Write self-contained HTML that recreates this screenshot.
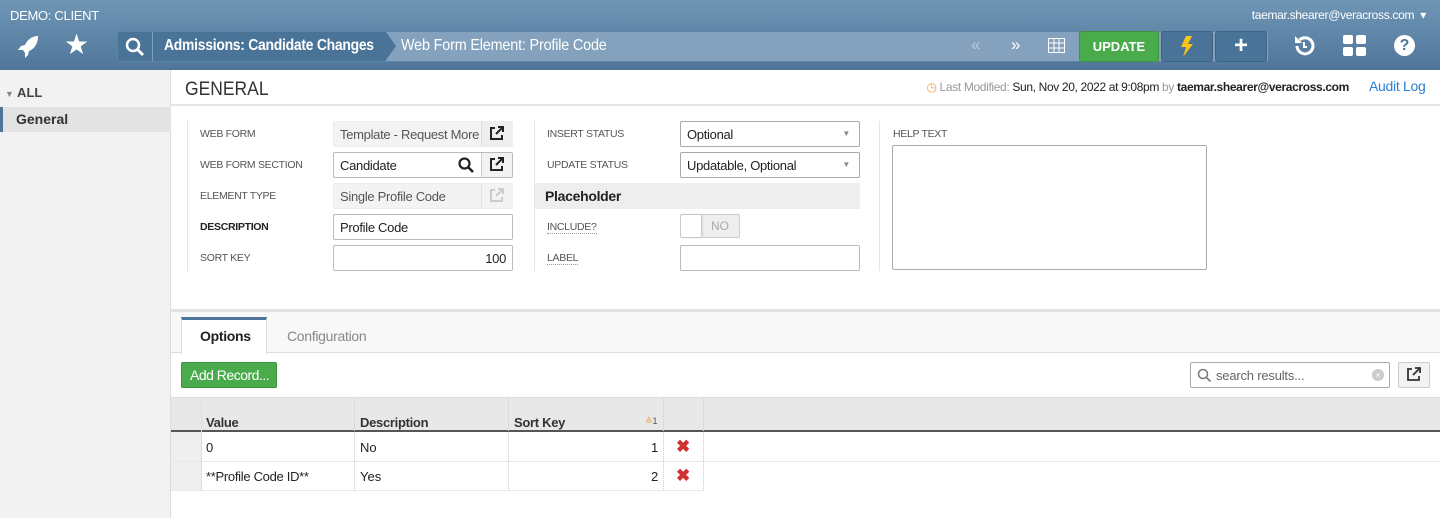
<!DOCTYPE html>
<html><head><meta charset="utf-8"><style>
*{box-sizing:border-box;margin:0;padding:0}
body{width:1440px;height:518px;overflow:hidden;font-family:"Liberation Sans",sans-serif;background:#fff;position:relative;color:#222}
.abs{position:absolute}
.top{left:0;top:0;width:1440px;height:70px;background:linear-gradient(#7096b6,#4f7699);}
.lbl{font-size:10.5px;color:#555;letter-spacing:-.3px}
.inp{position:absolute;height:26px;border:1px solid #bbb;background:#fff;font-size:13px;letter-spacing:-.3px;padding:5px 6px;border-radius:2px;white-space:nowrap;overflow:hidden}
.ro{background:#f3f3f3;border-color:#eee}
</style></head><body>
<div class="abs top"></div>
<div class="abs" style="left:10px;top:8px;color:#fff;font-size:13px;letter-spacing:-.3px">DEMO: CLIENT</div>
<div class="abs" style="right:14px;top:8px;color:#fff;font-size:12px;letter-spacing:-.3px">taemar.shearer@veracross.com &nbsp;▾</div>
<svg class="abs" style="left:16px;top:34px" width="24" height="24" viewBox="0 0 24 24"><path d="M22 2c-6 0-11 4-13 9l-4 1-3 4 5 0 2 3 0 5 3-3 1-4c5-2 9-7 9-15z" fill="#fff"/></svg>
<div class="abs" style="left:64px;top:28px;color:#fff;font-size:28px">★</div>
<div class="abs" style="left:117px;top:31px;width:1152px;height:31px;background:#84a2bd;border:1px solid #5f83a4;border-radius:3px"></div>
<div class="abs" style="left:118px;top:32px;width:268px;height:29px;background:#4a7398"></div>
<div class="abs" style="left:386px;top:32px;width:0;height:0;border-top:14.5px solid transparent;border-bottom:14.5px solid transparent;border-left:10px solid #4a7398"></div>
<div class="abs" style="left:152px;top:32px;width:1px;height:29px;background:#7f9fbb"></div>
<svg class="abs" style="left:125px;top:37px" width="20" height="20" viewBox="0 0 20 20"><circle cx="8" cy="8" r="6" stroke="#fff" stroke-width="2.5" fill="none"/><path d="M12 12l6 6" stroke="#fff" stroke-width="3"/></svg>
<div class="abs" style="left:164px;top:37px;color:#fff;font-size:16px;font-weight:bold;letter-spacing:-.3px;transform:scaleX(.87);transform-origin:left;white-space:nowrap">Admissions: Candidate Changes</div>
<div class="abs" style="left:401px;top:37px;color:#fff;font-size:16px;letter-spacing:-.2px;transform:scaleX(.9);transform-origin:left;white-space:nowrap">Web Form Element: Profile Code</div>
<div class="abs" style="left:971px;top:35px;color:#b8cadb;font-size:17px">«</div>
<div class="abs" style="left:1011px;top:35px;color:#fff;font-size:17px">»</div>
<svg class="abs" style="left:1048px;top:38px" width="17" height="15" viewBox="0 0 17 15"><rect x=".5" y=".5" width="16" height="14" fill="none" stroke="#fff"/><path d="M0 5h17M0 10h17M6 0v15M11 0v15" stroke="#fff"/></svg>
<div class="abs" style="left:1079px;top:31px;width:80px;height:31px;background:#4aab4c;border:1px solid #3d9340;border-radius:3px;color:#fff;font-weight:bold;font-size:13px;text-align:center;line-height:29px">UPDATE</div>
<div class="abs" style="left:1161px;top:31px;width:52px;height:31px;background:#4a7398;border:1px solid #3e6385;border-radius:3px"></div>
<svg class="abs" style="left:1180px;top:36px" width="14" height="21" viewBox="0 0 14 21"><path d="M6 0h6L8 8h5L3 21l3-10H1z" fill="#f5c518"/></svg>
<div class="abs" style="left:1215px;top:31px;width:52px;height:31px;background:#4a7398;border:1px solid #3e6385;border-radius:3px;color:#fff;text-align:center;font-size:24px;font-weight:bold;line-height:28px">+</div>
<svg class="abs" style="left:1292px;top:34px" width="24" height="24" viewBox="0 0 24 24"><path d="M5 12a8 8 0 1 0 2.5-6" stroke="#fff" stroke-width="3" fill="none"/><path d="M3 2v7h7z" fill="#fff"/><path d="M12 8v5h3" stroke="#fff" stroke-width="2" fill="none"/></svg>
<svg class="abs" style="left:1343px;top:35px" width="23" height="21"><rect width="10" height="9" rx="2" fill="#fff"/><rect x="13" width="10" height="9" rx="2" fill="#fff"/><rect y="12" width="10" height="9" rx="2" fill="#fff"/><rect x="13" y="12" width="10" height="9" rx="2" fill="#fff"/></svg>
<div class="abs" style="left:1394px;top:35px;width:21px;height:21px;border-radius:50%;background:#fff;color:#4f7699;font-weight:bold;font-size:16px;text-align:center;line-height:21px">?</div>
<!-- sidebar -->
<div class="abs" style="left:0;top:70px;width:171px;height:448px;background:#f2f2f2;border-right:1px solid #ddd"></div>
<div class="abs" style="left:5px;top:85px;font-size:13px;font-weight:bold;color:#444"><span style="font-size:9px;color:#888">▼</span> ALL</div>
<div class="abs" style="left:0;top:107px;width:171px;height:25px;background:#e3e3e3;border-left:3px solid #4f7699"></div>
<div class="abs" style="left:16px;top:111px;font-size:14px;font-weight:bold;color:#333">General</div>
<!-- header -->
<div class="abs" style="left:185px;top:79px;font-size:19px;color:#333;transform:scaleX(.92);transform-origin:left">GENERAL</div>
<div class="abs" style="right:91px;top:80px;font-size:12px;color:#999;letter-spacing:-.35px;white-space:nowrap"><span style="color:#f0a040">◷</span> Last Modified: <span style="color:#222">Sun, Nov 20, 2022 at 9:08pm</span> by <b style="color:#222">taemar.shearer@veracross.com</b></div>
<div class="abs" style="left:1369px;top:78px;font-size:14px;color:#2a7fd4;letter-spacing:-.3px">Audit Log</div>
<div class="abs" style="left:171px;top:104px;width:1269px;height:2px;background:#e6e6e6"></div>
<!-- form -->
<div class="abs" style="left:187px;top:121px;width:1px;height:150px;background:#e5e5e5"></div>
<div class="abs" style="left:534px;top:121px;width:1px;height:150px;background:#e5e5e5"></div>
<div class="abs" style="left:879px;top:121px;width:1px;height:150px;background:#e5e5e5"></div>
<div class="abs lbl" style="left:200px;top:128px">WEB FORM</div>
<div class="abs lbl" style="left:200px;top:159px">WEB FORM SECTION</div>
<div class="abs lbl" style="left:200px;top:190px">ELEMENT TYPE</div>
<div class="abs lbl" style="left:200px;top:221px;font-weight:bold;color:#222">DESCRIPTION</div>
<div class="abs lbl" style="left:200px;top:252px">SORT KEY</div>
<div class="inp ro" style="left:333px;top:121px;width:180px;color:#555">Template - Request More I</div>
<div class="inp" style="left:333px;top:152px;width:180px">Candidate</div>
<div class="inp ro" style="left:333px;top:183px;width:180px;color:#555">Single Profile Code</div>
<div class="inp" style="left:333px;top:214px;width:180px">Profile Code</div>
<div class="inp" style="left:333px;top:245px;width:180px;text-align:right">100</div>
<div class="abs" style="left:481px;top:122px;width:31px;height:24px;background:#eee;border-left:1px solid #ddd"></div>
<div class="abs" style="left:481px;top:153px;width:31px;height:24px;background:#f2f2f2;border-left:1px solid #ccc"></div>
<div class="abs" style="left:481px;top:184px;width:31px;height:24px;background:#f3f3f3;border-left:1px solid #e5e5e5"></div>
<svg class="abs" style="left:489px;top:126px" width="15" height="15" viewBox="0 0 15 15"><path d="M6 2H2v11h11V9" stroke="#222" stroke-width="2" fill="none"/><path d="M7 8l6-6M9 1h5v5" stroke="#222" stroke-width="2" fill="none"/></svg>
<svg class="abs" style="left:489px;top:157px" width="15" height="15" viewBox="0 0 15 15"><path d="M6 2H2v11h11V9" stroke="#222" stroke-width="2" fill="none"/><path d="M7 8l6-6M9 1h5v5" stroke="#222" stroke-width="2" fill="none"/></svg>
<svg class="abs" style="left:489px;top:188px" width="15" height="15" viewBox="0 0 15 15"><path d="M6 2H2v11h11V9" stroke="#ccc" stroke-width="2" fill="none"/><path d="M7 8l6-6M9 1h5v5" stroke="#ccc" stroke-width="2" fill="none"/></svg>
<svg class="abs" style="left:458px;top:157px" width="16" height="16" viewBox="0 0 16 16"><circle cx="6.5" cy="6.5" r="5" stroke="#222" stroke-width="2.2" fill="none"/><path d="M10 10l5 5" stroke="#222" stroke-width="2.6"/></svg>
<div class="abs lbl" style="left:547px;top:128px">INSERT STATUS</div>
<div class="abs lbl" style="left:547px;top:159px">UPDATE STATUS</div>
<div class="abs" style="left:535px;top:183px;width:325px;height:26px;background:#eeeeee"></div>
<div class="abs" style="left:545px;top:188px;font-size:14px;font-weight:bold;letter-spacing:-.3px">Placeholder</div>
<div class="abs lbl" style="left:547px;top:221px;border-bottom:1px dotted #999">INCLUDE?</div>
<div class="abs lbl" style="left:547px;top:252px;border-bottom:1px dotted #999">LABEL</div>
<div class="inp" style="left:680px;top:121px;width:180px;border-color:#aaa">Optional<span style="position:absolute;right:9px;top:7px;font-size:8px;color:#888">▼</span></div>
<div class="inp" style="left:680px;top:152px;width:180px;border-color:#aaa">Updatable, Optional<span style="position:absolute;right:9px;top:7px;font-size:8px;color:#888">▼</span></div>
<div class="abs" style="left:680px;top:214px;width:60px;height:24px;border:1px solid #ccc;background:#eee;border-radius:2px;font-size:12px;color:#aaa;padding:4px 0 0 30px">NO</div>
<div class="abs" style="left:681px;top:215px;width:20px;height:22px;background:#fff;border-radius:2px;box-shadow:1px 0 2px #bbb"></div>
<div class="inp" style="left:680px;top:245px;width:180px"></div>
<div class="abs lbl" style="left:893px;top:128px">HELP TEXT</div>
<div class="abs" style="left:892px;top:145px;width:315px;height:125px;border:1px solid #aaa;border-radius:2px"></div>
<!-- divider -->
<div class="abs" style="left:171px;top:309px;width:1269px;height:3px;background:#e3e3e3"></div>
<div class="abs" style="left:171px;top:312px;width:1269px;height:41px;background:#f8f8f8;border-bottom:1px solid #ddd"></div>
<div class="abs" style="left:181px;top:317px;width:86px;height:37px;background:#fff;border:1px solid #ddd;border-top:3px solid #4f7699;border-bottom:none"></div>
<div class="abs" style="left:200px;top:328px;font-size:14px;font-weight:bold;letter-spacing:-.3px">Options</div>
<div class="abs" style="left:287px;top:328px;font-size:14px;color:#888;letter-spacing:-.3px">Configuration</div>
<div class="abs" style="left:181px;top:362px;width:96px;height:26px;background:#4aab4c;border:1px solid #3d9340;border-radius:2px;color:#fff;font-size:14px;letter-spacing:-.5px;padding:4px 0 0 8px;white-space:nowrap">Add Record...</div>
<div class="abs" style="left:1190px;top:362px;width:200px;height:26px;border:1px solid #aaa;border-radius:2px;font-size:13px;color:#666;padding:5px 0 0 25px;letter-spacing:-.2px">search results...</div>
<svg class="abs" style="left:1197px;top:368px" width="15" height="15" viewBox="0 0 15 15"><circle cx="6" cy="6" r="4.5" stroke="#777" stroke-width="1.5" fill="none"/><path d="M9.5 9.5l4 4" stroke="#777" stroke-width="1.6"/></svg>
<div class="abs" style="left:1372px;top:369px;width:12px;height:12px;border-radius:50%;background:#ccc;color:#fff;font-size:9px;text-align:center;line-height:12px">×</div>
<div class="abs" style="left:1398px;top:362px;width:32px;height:26px;border:1px solid #ccc;border-radius:2px;background:#f3f3f3"></div>
<svg class="abs" style="left:1406px;top:367px" width="15" height="15" viewBox="0 0 15 15"><path d="M6 2H2v11h11V9" stroke="#333" stroke-width="1.8" fill="none"/><path d="M7 8l6-6M9 1h5v5" stroke="#333" stroke-width="1.8" fill="none"/></svg>
<!-- table -->
<div class="abs" style="left:171px;top:397px;width:1269px;height:35px;background:#e8e8e8;border-top:1px solid #ddd;border-bottom:2px solid #555"></div>
<div class="abs" style="left:171px;top:432px;width:30px;height:58px;background:#efefef"></div>
<div class="abs" style="left:171px;top:461px;width:1269px;height:1px;background:#e8e8e8"></div>
<div class="abs" style="left:171px;top:490px;width:533px;height:1px;background:#e8e8e8"></div>
<div class="abs" style="left:201px;top:398px;width:1px;height:93px;background:#ddd"></div>
<div class="abs" style="left:354px;top:398px;width:0;height:93px;border-left:1px dotted #ccc"></div>
<div class="abs" style="left:508px;top:398px;width:0;height:93px;border-left:1px dotted #ccc"></div>
<div class="abs" style="left:663px;top:398px;width:0;height:93px;border-left:1px dotted #ccc"></div>
<div class="abs" style="left:703px;top:398px;width:0;height:93px;border-left:1px dotted #ccc"></div>
<div class="abs" style="left:206px;top:415px;font-size:13px;font-weight:bold;color:#333;letter-spacing:-.3px">Value</div>
<div class="abs" style="left:360px;top:415px;font-size:13px;font-weight:bold;color:#333;letter-spacing:-.3px">Description</div>
<div class="abs" style="left:514px;top:415px;font-size:13px;font-weight:bold;color:#333;letter-spacing:-.3px">Sort Key</div>
<div class="abs" style="left:645px;top:416px;font-size:9px;color:#f0a040">≙<span style="color:#555">1</span></div>
<div class="abs" style="left:206px;top:440px;font-size:13px">0</div>
<div class="abs" style="left:360px;top:440px;font-size:13px">No</div>
<div class="abs" style="left:651px;top:440px;font-size:13px">1</div>
<div class="abs" style="left:676px;top:437px;font-size:17px;color:#d03030;font-weight:bold">✖</div>
<div class="abs" style="left:206px;top:469px;font-size:13px;letter-spacing:-.3px">**Profile Code ID**</div>
<div class="abs" style="left:360px;top:469px;font-size:13px">Yes</div>
<div class="abs" style="left:651px;top:469px;font-size:13px">2</div>
<div class="abs" style="left:676px;top:466px;font-size:17px;color:#d03030;font-weight:bold">✖</div>
</body></html>
